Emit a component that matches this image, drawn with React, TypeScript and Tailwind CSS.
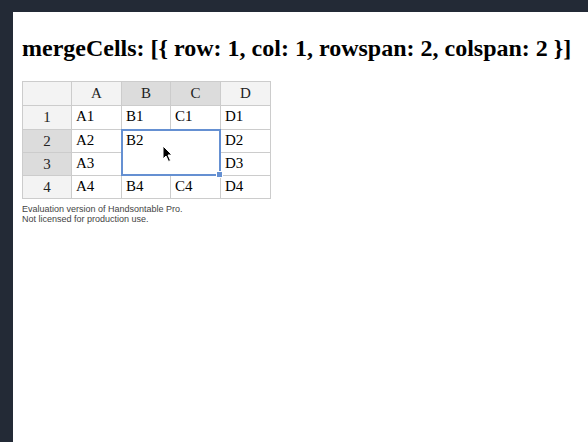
import React from "react";

const serif = { fontFamily: '"Liberation Serif", "Times New Roman", serif' };

function Cursor() {
  return (
    <svg width="12" height="18" viewBox="0 0 12 18" className="absolute left-[40px] top-[15px]">
      <path d="M1 1 L1 14 L4 11 L6.5 16.5 L8.5 15.5 L6 10 L10 10 Z" fill="#000" stroke="#fff" strokeWidth="1" strokeLinejoin="round" />
    </svg>
  );
}

export default function App() {
  const th = "border-r border-b border-[#cccccc] text-center font-normal text-[#222] px-1 align-middle";
  const td = "border-r border-b border-[#cccccc] text-left px-[4px] align-top text-black";
  const hl = "bg-[#dcdcdc]";
  const nm = "bg-[#f3f3f3]";
  return (
    <div className="w-[588px] h-[442px] bg-[#232a36] flex flex-col overflow-hidden">
      <div className="h-[12px] shrink-0" />
      <div className="flex flex-1">
        <div className="w-[13px] shrink-0" />
        <div className="flex-1 bg-white pl-[9px] pt-[21px]" style={serif}>
          <h2 className="text-[24px] font-bold leading-[30px] text-black whitespace-nowrap">
            mergeCells: [{"{"} row: 1, col: 1, rowspan: 2, colspan: 2 {"}"}]
          </h2>
          <table className="mt-[18px] border-separate border-spacing-0 table-fixed text-[15px] leading-[21px]" style={serif}>
            <colgroup>
              <col className="w-[50px]" />
              <col className="w-[50px]" />
              <col className="w-[49px]" />
              <col className="w-[50px]" />
              <col className="w-[50px]" />
            </colgroup>
            <tbody>
              <tr className="h-[25px]">
                <th className={`${th} ${nm} border-t border-l`}></th>
                <th className={`${th} ${nm} border-t`}>A</th>
                <th className={`${th} ${hl} border-t`}>B</th>
                <th className={`${th} ${hl} border-t`}>C</th>
                <th className={`${th} ${nm} border-t`}>D</th>
              </tr>
              <tr className="h-[24px]">
                <th className={`${th} ${nm} border-l`}>1</th>
                <td className={td}>A1</td>
                <td className={td}>B1</td>
                <td className={td}>C1</td>
                <td className={td}>D1</td>
              </tr>
              <tr className="h-[23px]">
                <th className={`${th} ${hl} border-l`}>2</th>
                <td className={td}>A2</td>
                <td className={`${td} relative`} colSpan={2} rowSpan={2}>
                  B2
                  <div className="absolute left-[-1px] top-[-1px] right-[-1px] bottom-[-1px] border-2 border-[#6590d2] pointer-events-none" />
                  <div className="absolute right-[-3px] bottom-[-3px] w-[5px] h-[5px] bg-[#6590d2] border border-white box-content" />
                  <Cursor />
                </td>
                <td className={td}>D2</td>
              </tr>
              <tr className="h-[23px]">
                <th className={`${th} ${hl} border-l`}>3</th>
                <td className={td}>A3</td>
                <td className={td}>D3</td>
              </tr>
              <tr className="h-[23px]">
                <th className={`${th} ${nm} border-l`}>4</th>
                <td className={td}>A4</td>
                <td className={td}>B4</td>
                <td className={td}>C4</td>
                <td className={td}>D4</td>
              </tr>
            </tbody>
          </table>
          <div
            className="mt-[5px] text-[9px] leading-[10px] text-[#444]"
            style={{ fontFamily: '"Liberation Sans", Arial, sans-serif' }}
          >
            <div>Evaluation version of Handsontable Pro.</div>
            <div>Not licensed for production use.</div>
          </div>
        </div>
      </div>
    </div>
  );
}
